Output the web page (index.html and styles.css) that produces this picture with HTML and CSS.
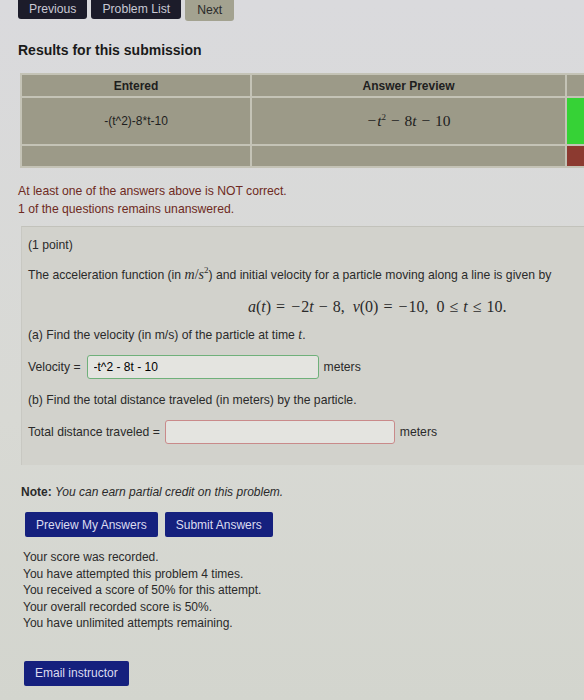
FILE: index.html
```html
<!DOCTYPE html>
<html lang="en">
<head>
<meta charset="UTF-8">
<meta name="viewport" content="width=device-width, initial-scale=1.0">
<title>Problem</title>
<link rel="stylesheet" href="styles.css">
</head>
<body>
    <div class="nav">
        <button class="navbtn">Previous</button>
        <button class="navbtn">Problem List</button>
        <button class="navbtn next">Next</button>
    </div>

    <h2 class="results-title">Results for this submission</h2>
    <table class="attempts">
        <tr class="head">
            <th class="entered">Entered</th>
            <th class="preview">Answer Preview</th>
            <th class="status"></th>
        </tr>
        <tr class="answer">
            <td>-(t^2)-8*t-10</td>
            <td class="math"><span class="op">&minus;</span><i>t</i><sup>2</sup> <span class="op">&minus;</span> 8<i>t</i> <span class="op">&minus;</span> 10</td>
            <td class="status ok"></td>
        </tr>
        <tr class="blank">
            <td></td>
            <td></td>
            <td class="status bad"></td>
        </tr>
    </table>

    <div class="summary">
        <div>At least one of the answers above is NOT correct.</div>
        <div>1 of the questions remains unanswered.</div>
    </div>

    <div class="problem">
        <p class="points">(1 point)</p>
        <p class="intro">The acceleration function (in <span class="math"><i>m</i>/<i>s</i><sup>2</sup></span>) and initial velocity for a particle moving along a line is given by</p>
        <p class="display math"><i>a</i>(<i>t</i>) <span class="op">=</span> <span class="op">&minus;</span>2<i>t</i> <span class="op">&minus;</span> 8, &nbsp;<i>v</i>(0) <span class="op">=</span> <span class="op">&minus;</span>10, &nbsp;0 <span class="op">&le;</span> <i>t</i> <span class="op">&le;</span> 10.</p>
        <p class="part">(a) Find the velocity (in m/s) of the particle at time <span class="math"><i>t</i></span>.</p>
        <div class="field">
            <label for="ans1">Velocity =</label>
            <input type="text" id="ans1" class="ans correct" value="-t^2 - 8t - 10">
            <span>meters</span>
        </div>
        <p class="part second">(b) Find the total distance traveled (in meters) by the particle.</p>
        <div class="field">
            <label for="ans2">Total distance traveled =</label>
            <input type="text" id="ans2" class="ans incorrect" value="">
            <span>meters</span>
        </div>
    </div>

    <p class="note"><b>Note:</b> <i>You can earn partial credit on this problem.</i></p>

    <div class="actions">
        <button class="btn">Preview My Answers</button>
        <button class="btn">Submit Answers</button>
    </div>

    <div class="score">
        <div>Your score was recorded.</div>
        <div>You have attempted this problem 4 times.</div>
        <div>You received a score of 50% for this attempt.</div>
        <div>Your overall recorded score is 50%.</div>
        <div>You have unlimited attempts remaining.</div>
    </div>

    <button class="btn email">Email instructor</button>
</body>
</html>
```

FILE: styles.css
```css
body {
    font-family: "Liberation Sans", Arial, sans-serif;
    font-size: 12.2px;
    line-height: 14px;
    color: #2a2a2a;
    margin: 0;
    padding: 0 0 0 18px;
    background: linear-gradient(#dadadd, #d8d9d4 60%, #d3d5ce);
    min-height: 700px;
    overflow: hidden;
}
.nav {
    display: flex;
    gap: 4px;
    height: 21px;
}
.navbtn {
    font-family: inherit;
    font-size: 12.2px;
    background-color: #1c1c2a;
    color: #c8c8d4;
    border: none;
    border-radius: 0 0 3px 3px;
    padding: 0 11px;
    height: 19px;
    line-height: 17px;
}
.next {
    background-color: #a3a290;
    color: #2a2a2a;
    height: 21px;
    padding: 0 12px;
}
.results-title {
    font-size: 14px;
    line-height: 16px;
    margin: 21px 0 15px 0;
    color: #1a1a1a;
}
.attempts {
    border-collapse: collapse;
    background-color: #9c9a88;
    width: 564px;
    margin-left: 2px;
    border: 2px solid #8a887a;
    border-right: none;
}
.attempts th,
.attempts td {
    border: 2px solid #c4c3b6;
    text-align: center;
    padding: 0;
    color: #1e1e1e;
}
.attempts th {
    height: 21px;
    font-size: 12px;
}
.entered {
    width: 228px;
}
.preview {
    width: 313px;
}
.attempts .status {
    border-right: none;
}
.attempts .answer td {
    height: 46px;
    font-size: 12px;
}
.attempts .blank td {
    height: 20px;
}
.attempts .ok {
    background-color: #36d236;
}
.attempts .bad {
    background-color: #8c3a30;
}
.math {
    font-family: "Liberation Serif", "Times New Roman", serif;
    font-size: 14px;
}
.math sup {
    font-size: 9px;
    line-height: 0;
}
.attempts td.math {
    font-size: 15.5px;
}
.op {
    margin: 0 1px;
}
.summary {
    color: #6e2a22;
    margin-top: 14px;
    line-height: 18px;
}
.problem {
    margin: 8px 0 0 3px;
    background-color: #d2d2cc;
    border-top: 1px solid #c2c2bb;
    border-left: 1px solid #c8c8c2;
    padding: 11px 0 21px 6px;
}
.problem p {
    margin: 0;
}
.problem .intro {
    margin-top: 16px;
}
.problem .display {
    margin-top: 16px;
    padding-left: 220px;
    font-size: 16px;
    line-height: 18px;
}
.problem .part {
    margin-top: 12px;
}
.problem .second {
    margin-top: 14px;
}
.field {
    display: flex;
    align-items: center;
    gap: 5px;
    margin-top: 13px;
    height: 24px;
}
.ans {
    font-family: inherit;
    font-size: 12px;
    background-color: #e4e4e0;
    border-radius: 3px;
    padding: 0 6px;
    height: 24px;
    box-sizing: border-box;
}
#ans1 {
    width: 232px;
    margin-left: 1px;
}
#ans2 {
    width: 230px;
}
.correct {
    border: 1px solid #6fb07a;
}
.incorrect {
    border: 1px solid #c98a8a;
}
.note {
    font-size: 12px;
    margin: 20px 0 13px 3px;
    color: #2a2a2a;
}
.actions {
    display: flex;
    gap: 7px;
    margin-left: 7px;
}
.btn {
    font-family: inherit;
    font-size: 12px;
    background-color: #15207e;
    color: #dcdcf0;
    border: none;
    border-radius: 2px;
    height: 25px;
    padding: 0 11px;
}
.score {
    font-size: 12px;
    margin: 12px 0 0 5px;
    line-height: 16.5px;
}
.email {
    margin: 29px 0 0 6px;
    padding: 0 11px;
}
```
